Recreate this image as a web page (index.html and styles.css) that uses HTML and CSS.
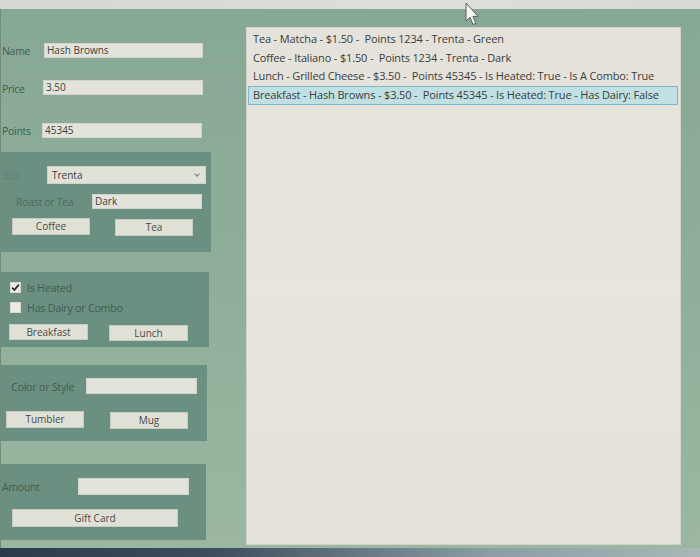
FILE: index.html
```html
<!DOCTYPE html>
<html>
<head>
<meta charset="utf-8">
<link rel="stylesheet" href="styles.css">
</head>
<body>
<div class="screen">
  <div class="topbar"></div>
  <div class="window">
    <div class="left">
      <div class="frow r-name">
        <span class="lbl l-name">Name</span>
        <div class="tb w159">Hash Browns</div>
      </div>
      <div class="frow r-price">
        <span class="lbl l-price">Price</span>
        <div class="tb w160">3.50</div>
      </div>
      <div class="frow r-points">
        <span class="lbl l-points">Points</span>
        <div class="tb w160">45345</div>
      </div>

      <div class="panel p1">
        <div class="frow r-size">
          <span class="lbl l-size">Size</span>
          <div class="combo">Trenta<span class="arrow"></span></div>
        </div>
        <div class="frow r-roast">
          <span class="lbl l-roast">Roast or Tea</span>
          <div class="tb w110">Dark</div>
        </div>
        <div class="brow r-cbtn">
          <div class="btn b-coffee">Coffee</div>
          <div class="btn b-tea">Tea</div>
        </div>
      </div>

      <div class="panel p2">
        <div class="crow r-c1">
          <span class="check on"><svg viewBox="0 0 11 11" width="11" height="11"><path d="M2.2 5.6 L4.4 8 L8.8 2.6" fill="none" stroke="#1e2a26" stroke-width="1.7"/></svg></span>
          <span class="clbl">Is Heated</span>
        </div>
        <div class="crow r-c2">
          <span class="check"></span>
          <span class="clbl">Has Dairy or Combo</span>
        </div>
        <div class="brow r-fbtn">
          <div class="btn b-break">Breakfast</div>
          <div class="btn b-lunch">Lunch</div>
        </div>
      </div>

      <div class="panel p3">
        <div class="frow r-color">
          <span class="lbl l-color">Color or Style</span>
          <div class="tb w111 h16"></div>
        </div>
        <div class="brow r-mbtn">
          <div class="btn b-tumbler">Tumbler</div>
          <div class="btn b-mug">Mug</div>
        </div>
      </div>

      <div class="panel p4">
        <div class="frow r-amount">
          <span class="lbl l-amount">Amount</span>
          <div class="tb w111 h17"></div>
        </div>
        <div class="brow r-gbtn">
          <div class="btn b-gift">Gift Card</div>
        </div>
      </div>
    </div>

    <div class="list">
      <div class="item">Tea - Matcha - $1.50 -&nbsp; Points 1234 - Trenta - Green</div>
      <div class="item">Coffee - Italiano - $1.50 -&nbsp; Points 1234 - Trenta - Dark</div>
      <div class="item">Lunch - Grilled Cheese - $3.50 -&nbsp; Points 45345 - Is Heated: True - Is A Combo: True</div>
      <div class="item sel">Breakfast - Hash Browns - $3.50 -&nbsp; Points 45345 - Is Heated: True - Has Dairy: False</div>
    </div>
  </div>
  <div class="bottombar"></div>

  <svg class="cursor" viewBox="0 0 14 24" width="14" height="24">
    <path d="M1 1 L1 19 L5 15.3 L8 22.5 L10.8 21.3 L7.9 14.4 L13 14.4 Z" fill="#f4f4f2" stroke="#5a5e5c" stroke-width="1"/>
  </svg>
</div>
</body>
</html>
```

FILE: styles.css
```css
* { box-sizing: border-box; }
html, body { margin: 0; padding: 0; }
body {
  width: 700px;
  height: 557px;
  overflow: hidden;
  font-family: "Open Sans", "Noto Sans", sans-serif;
  font-size: 10px;
  background: #8eac98;
}
.screen {
  position: relative;
  width: 700px;
  height: 557px;
  display: flex;
  flex-direction: column;
  overflow: hidden;
}
.topbar {
  height: 9px;
  flex: none;
  background: linear-gradient(90deg, #d6d7d2, #dedfda 60%, #d9dad5);
}
.window {
  height: 539px;
  flex: none;
  display: flex;
  background: linear-gradient(180deg, #87a893 0%, #8fae99 50%, #9bb7a1 100%);
  border-left: 1px solid #6f8d7d;
}
.bottombar {
  flex: 1;
  background: linear-gradient(90deg, #2c3a4e 0%, #3d4c5e 30%, #8a9ea4 70%, #a9b8b6 100%);
}
.left {
  width: 245px;
  flex: none;
  display: flex;
  flex-direction: column;
}

/* field rows */
.frow {
  display: flex;
  align-items: center;
  height: 15px;
}
.lbl {
  flex: none;
  color: #3f5d53;
  white-space: nowrap;
  font-size: 10.5px;
  letter-spacing: -0.3px;
}
.tb {
  height: 15px;
  background: #e4e3db;
  border: 1px solid #d2d3c9;
  color: #3a3d3b;
  padding-left: 2px;
  line-height: 13px;
  font-size: 10px;
  white-space: nowrap;
}
.w159 { width: 159px; }
.w160 { width: 160px; }
.w110 { width: 110px; }
.w111 { width: 111px; }
.h16 { height: 16px; }
.h17 { height: 17px; }

.r-name { margin-top: 34px; }
.l-name { width: 43px; padding-left: 1px; }
.r-price { margin-top: 22px; }
.l-price { width: 42px; padding-left: 1px; padding-top: 3px; }
.r-points { margin-top: 28px; }
.l-points { width: 41px; padding-left: 1px; }

/* panels */
.panel {
  background: #6b9081;
  display: flex;
  flex-direction: column;
  flex: none;
}
.p1 { margin-top: 14px; height: 100px; width: 210px; }
.p2 { margin-top: 20px; height: 75px; width: 208px; }
.p3 { margin-top: 18px; height: 76px; width: 206px; }
.p4 { margin-top: 23px; height: 76px; width: 205px; }

.r-size { margin-top: 14px; height: 18px; }
.l-size { width: 46px; padding-left: 2px; color: #5f8074; }
.combo {
  width: 159px;
  height: 18px;
  background: #e2e1d8;
  border: 1px solid #d3d3c8;
  color: #3a3d3b;
  padding-left: 4px;
  line-height: 16px;
  display: flex;
  justify-content: space-between;
  align-items: center;
}
.arrow {
  width: 4px;
  height: 4px;
  border-right: 1px solid #7d7f7a;
  border-bottom: 1px solid #7d7f7a;
  transform: rotate(45deg);
  margin-right: 6px;
  margin-top: -2px;
}
.r-roast { margin-top: 10px; }
.l-roast { width: 91px; padding-left: 15px; color: #4c6b60; }

.brow {
  display: flex;
  align-items: flex-start;
}
.btn {
  flex: none;
  background: #e1e0d7;
  border: 1px solid #c9cac0;
  color: #474a46;
  font-size: 10px;
  text-align: center;
  line-height: 15px;
  height: 17px;
  width: 78px;
}
.r-cbtn { margin-top: 9px; padding-left: 11px; gap: 25px; }
.b-tea { margin-top: 1px; }

/* checkbox rows */
.crow {
  display: flex;
  align-items: center;
  height: 11px;
  padding-left: 9px;
}
.r-c1 { margin-top: 10px; }
.r-c2 { margin-top: 9px; }
.check {
  width: 11px;
  height: 11px;
  background: #ebebe4;
  border: 1px solid #d9d9d0;
  display: flex;
  flex: none;
}
.check svg { display: block; margin: -1px; }
.clbl {
  margin-left: 6px;
  color: #3e5c52;
  font-size: 10.8px;
  letter-spacing: -0.3px;
}
.r-fbtn { margin-top: 11px; padding-left: 8px; gap: 21px; }
.b-break, .b-lunch { height: 16px; line-height: 14px; width: 79px; }
.b-lunch { margin-top: 1px; }

.r-color { margin-top: 13px; height: 16px; }
.l-color { width: 85px; padding-left: 10px; color: #3f5d53; font-size: 10.8px; }
.r-mbtn { margin-top: 17px; padding-left: 5px; gap: 26px; }
.b-mug { margin-top: 1px; }

.r-amount { margin-top: 14px; height: 17px; }
.l-amount { width: 77px; padding-left: 1px; color: #3f5d53; }
.r-gbtn { margin-top: 14px; padding-left: 11px; }
.b-gift { width: 166px; height: 18px; line-height: 16px; }

/* list */
.list {
  margin-top: 18px;
  width: 435px;
  height: 518px;
  flex: none;
  background: linear-gradient(180deg, #e4e2da 0%, #e7e5dd 50%, #e3e1d8 100%);
  border: 1px solid #d4d4ca;
  padding: 2px 1px 0 1px;
}
.item {
  height: 18.7px;
  line-height: 18px;
  padding-left: 5px;
  color: #3b3d3b;
  font-size: 11px;
  white-space: nowrap;
  letter-spacing: -0.15px;
}
.sel {
  background: #c0e0e4;
  border: 1px solid #7eb5c8;
  padding-left: 4px;
  line-height: 16px;
  margin-right: 1px;
}

.cursor {
  position: absolute;
  left: 465px;
  top: 2px;
}
```
